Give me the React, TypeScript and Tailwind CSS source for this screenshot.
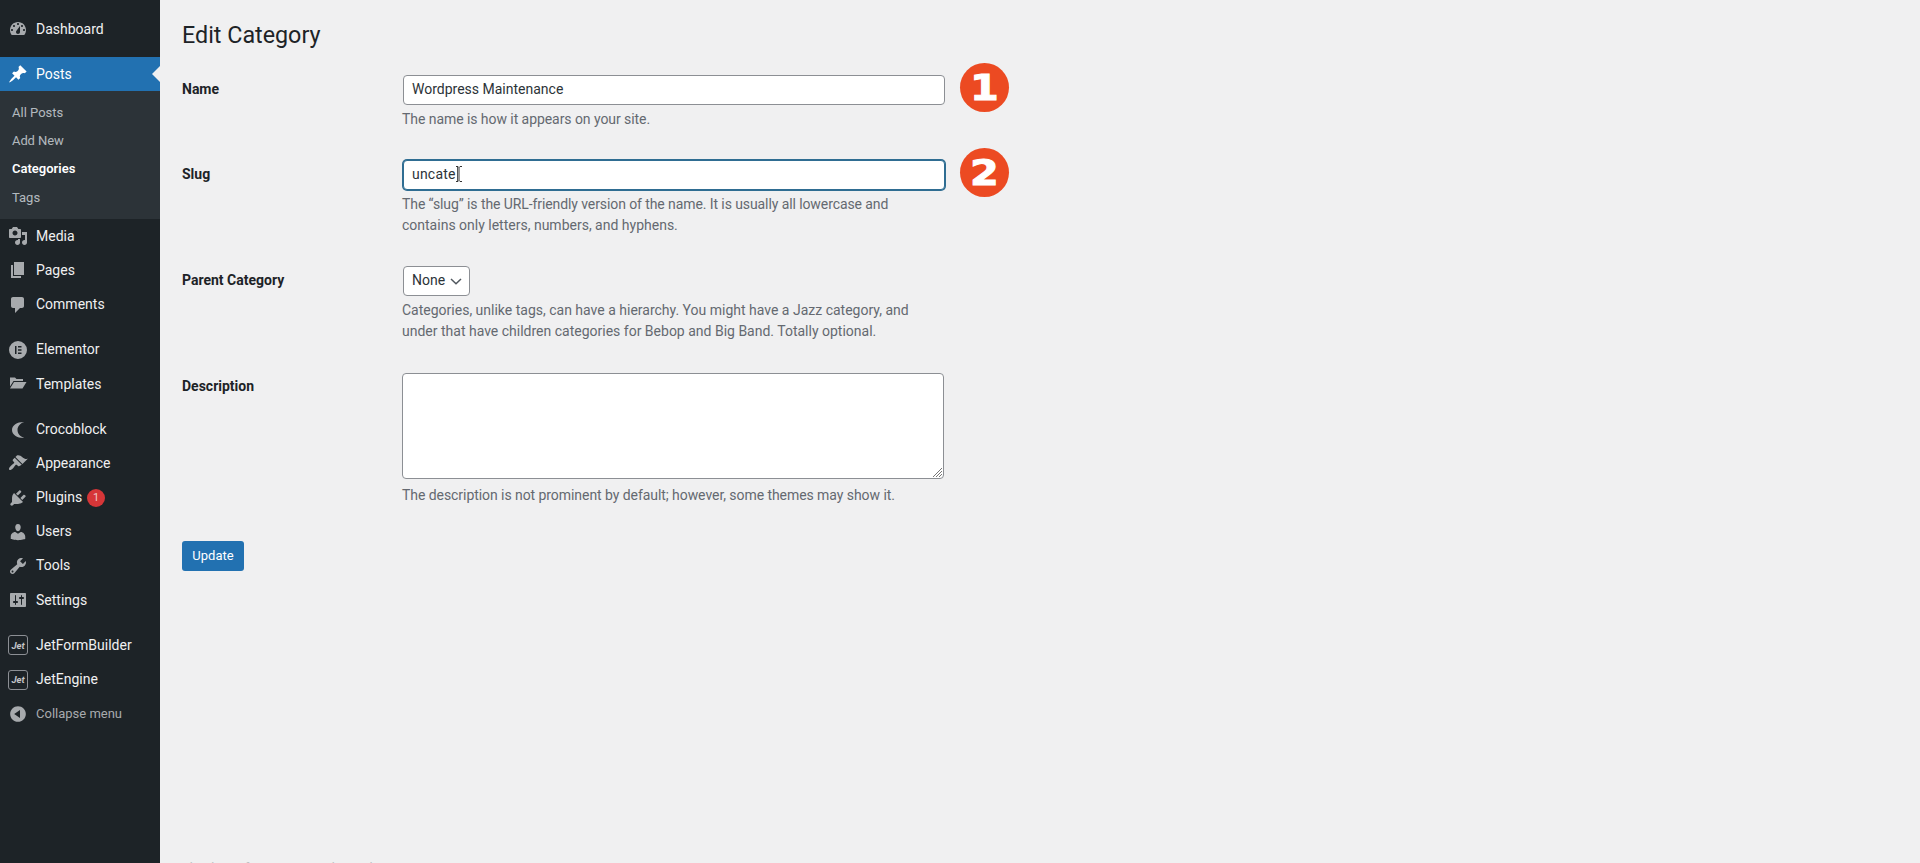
import React from "react";

const icons: Record<string, string> = {
  dashboard:
    "M3.76 16h12.48c1.1-1.37 1.76-3.11 1.76-5 0-4.42-3.58-8-8-8s-8 3.58-8 8c0 1.89.66 3.63 1.76 5zM10 4c.55 0 1 .45 1 1s-.45 1-1 1-1-.45-1-1 .45-1 1-1zM6 6c.55 0 1 .45 1 1s-.45 1-1 1-1-.45-1-1 .45-1 1-1zm8 0c.55 0 1 .45 1 1s-.45 1-1 1-1-.45-1-1 .45-1 1-1zm-5.37 5.55L12 7v6c0 1.1-.9 2-2 2s-2-.9-2-2c0-.57.24-1.08.63-1.45zM4 10c.55 0 1 .45 1 1s-.45 1-1 1-1-.45-1-1 .45-1 1-1zm12 0c.55 0 1 .45 1 1s-.45 1-1 1-1-.45-1-1 .45-1 1-1z",
  posts:
    "M10.44 3.02l1.82-1.82 6.36 6.35-1.83 1.82c-1.05-.68-2.48-.57-3.41.36l-.75.75c-.92.93-1.04 2.35-.35 3.41l-1.83 1.82-2.41-2.41-2.8 2.79c-.42.42-3.38 2.71-3.8 2.29s1.86-3.39 2.28-3.81l2.79-2.79L4.1 9.36l1.83-1.82c1.05.69 2.48.57 3.4-.36l.75-.75c.93-.92 1.05-2.35.36-3.41z",
  media:
    "M13 11V4c0-.55-.45-1-1-1h-1.67L9 1H5L3.67 3H2c-.55 0-1 .45-1 1v7c0 .55.45 1 1 1h10c.55 0 1-.45 1-1zM7 4.5c1.38 0 2.5 1.12 2.5 2.5S8.38 9.5 7 9.5 4.5 8.38 4.5 7 5.62 4.5 7 4.5zM14 6h5v10.5c0 1.38-1.12 2.5-2.5 2.5S14 17.88 14 16.5s1.12-2.5 2.5-2.5c.17 0 .34.02.5.05V9h-3V6zm-4 8.05V13h2v3.5c0 1.38-1.12 2.5-2.5 2.5S7 17.88 7 16.5 8.12 14 9.5 14c.17 0 .34.02.5.05z",
  pages: "M6 15V2h10v13H6zm-1 1h8v2H3V5h2v11z",
  comments:
    "M5 2h9c1.1 0 2 .9 2 2v7c0 1.1-.9 2-2 2h-2l-5 5v-5H5c-1.1 0-2-.9-2-2V4c0-1.1.9-2 2-2z",
  elementor:
    "M10 1a9 9 0 1 0 0 18 9 9 0 0 0 0-18zM7 6h1.5v8H7V6zm3 0h3.5v1.5H10V6zm0 3.25h3.5v1.5H10v-1.5zm0 3.25h3.5V14H10v-1.5z",
  templates: "M2 3.5h5l1.5 1.5h6.5V7H5.5L2 12.5V3.5zM6 8h12.5l-4 6.5H2L6 8z",
  croco:
    "M15.5 3C9 3 4 6.5 4 11s5 8 11.5 8c.3 0 .5 0 .7-.1C12 17.5 9.5 14.5 9.5 11s2.5-6.5 6.7-7.9c-.2-.1-.4-.1-.7-.1z",
  appearance:
    "M14.48 11.06L7.41 3.99l1.5-1.5c.5-.56 2.3-.47 3.51.32 1.21.8 1.43 1.28 2.91 2.1 1.18.64 2.45 1.26 4.45.85zm-.71.71L6.7 4.7 4.93 6.47c-.39.39-.39 1.02 0 1.41l1.06 1.06c.39.39.39 1.03 0 1.42-.6.6-1.43 1.11-2.21 1.69-.35.26-.7.53-1.01.84-1.34 1.34-2.37 2.96-1.52 3.81.84.84 2.46-.18 3.8-1.52.3-.3.58-.65.84-1 .58-.78 1.09-1.61 1.69-2.21.39-.39 1.02-.39 1.41 0l1.06 1.06c.39.39 1.02.39 1.41 0z",
  plugins:
    "M13.11 4.36L9.87 7.6 8 5.73l3.24-3.24c.35-.34 1.05-.2 1.56.32.52.51.66 1.21.31 1.55zm-8 1.77l.91-1.12 9.01 9.01-1.19.84c-.71.71-2.63 1.16-3.82 1.16H6.14L4.9 17.26c-.59.59-1.54.59-2.12 0-.59-.58-.59-1.53 0-2.12l1.24-1.24v-3.88c0-1.13.4-3.19 1.09-3.89zm7.26 3.97l3.24-3.24c.34-.35 1.04-.21 1.55.31.52.51.66 1.21.31 1.55l-3.24 3.25z",
  users:
    "M10 9.25c-2.27 0-2.73-3.44-2.73-3.44C7 4.02 7.82 2 9.97 2c2.16 0 2.98 2.02 2.71 3.81 0 0-.41 3.44-2.68 3.44zm0 2.57L12.72 10c2.39 0 4.52 2.33 4.52 4.53v2.49s-3.65 1.13-7.24 1.13c-3.65 0-7.24-1.13-7.24-1.13v-2.49c0-2.25 1.94-4.48 4.47-4.48z",
  tools:
    "M16.68 9.77c-1.34 1.34-3.3 1.67-4.95.99l-5.41 6.52c-.99.99-2.59.99-3.58 0s-.99-2.59 0-3.57l6.52-5.42c-.68-1.65-.35-3.61.99-4.95 1.28-1.28 3.12-1.62 4.72-1.06l-2.89 2.89 2.82 2.82 2.86-2.87c.53 1.58.18 3.39-1.08 4.65zM3.81 16.21c.4.39 1.04.39 1.43 0 .4-.4.4-1.04 0-1.43-.39-.4-1.03-.4-1.43 0-.39.39-.39 1.03 0 1.43z",
  settings:
    "M18 16V4c0-.55-.45-1-1-1H3c-.55 0-1 .45-1 1v12c0 .55.45 1 1 1h14c.55 0 1-.45 1-1zM8 11h1c.55 0 1 .45 1 1s-.45 1-1 1H8v1.5c0 .28-.22.5-.5.5s-.5-.22-.5-.5V13H6c-.55 0-1-.45-1-1s.45-1 1-1h1V5.5c0-.28.22-.5.5-.5s.5.22.5.5V11zm5-2h-1c-.55 0-1-.45-1-1s.45-1 1-1h1V5.5c0-.28.22-.5.5-.5s.5.22.5.5V7h1c.55 0 1 .45 1 1s-.45 1-1 1h-1v5.5c0 .28-.22.5-.5.5s-.5-.22-.5-.5V9z",
  collapse:
    "M10 2.16c4.33 0 7.84 3.51 7.84 7.84s-3.51 7.84-7.84 7.84S2.16 14.33 2.16 10 5.71 2.16 10 2.16zm2 11.72V6.12L6.18 9.97z",
};

function MenuIcon({ name }: { name: string }) {
  return (
    <svg viewBox="0 0 20 20" className="w-5 h-5 fill-current" fillRule="evenodd">
      <path d={icons[name]} />
    </svg>
  );
}

function JetIcon() {
  return (
    <div className="w-5 h-5 rounded-[3px] border border-[#8c8f94] flex items-center justify-center text-[9.5px] leading-none font-bold italic text-[#c3c4c7]">
      Jet
    </div>
  );
}

function MenuItem({
  icon,
  label,
  badge,
}: {
  icon?: string;
  label: string;
  badge?: string;
}) {
  return (
    <div className="flex items-center h-[34.2px] text-[14px] text-[#f0f0f1]">
      <div className="w-[36px] pl-2 text-[#a7aaad]">
        {icon ? <MenuIcon name={icon} /> : <JetIcon />}
      </div>
      <span>{label}</span>
      {badge && (
        <span className="ml-[5px] mt-[1px] w-[18px] h-[18px] rounded-full bg-[#d63638] text-[#f0c9c9] text-[11px] flex items-center justify-center">
          {badge}
        </span>
      )}
    </div>
  );
}

function Sidebar() {
  return (
    <aside className="w-[160px] shrink-0 h-full bg-[#1d2327] pt-3">
      <MenuItem icon="dashboard" label="Dashboard" />
      <div className="h-[11px]" />
      <div className="relative flex items-center h-[34px] bg-[#2271b1] text-[14px] text-white">
        <div className="w-[36px] pl-2">
          <MenuIcon name="posts" />
        </div>
        <span>Posts</span>
        <div className="absolute right-0 top-[9px] border-y-[8px] border-y-transparent border-r-[8px] border-r-[#f0f0f1]" />
      </div>
      <div className="bg-[#2c3338] h-[128px] pt-[7px] pl-3 text-[13px] text-[#f0f6fcb3]">
        <div className="h-[28.4px] flex items-center">All Posts</div>
        <div className="h-[28.4px] flex items-center tracking-[-0.1px]">Add New</div>
        <div className="h-[28.4px] flex items-center font-semibold text-white">Categories</div>
        <div className="h-[28.4px] flex items-center pt-[1px]">Tags</div>
      </div>
      <MenuItem icon="media" label="Media" />
      <MenuItem icon="pages" label="Pages" />
      <MenuItem icon="comments" label="Comments" />
      <div className="h-[11px]" />
      <MenuItem icon="elementor" label="Elementor" />
      <MenuItem icon="templates" label="Templates" />
      <div className="h-[11px]" />
      <MenuItem icon="croco" label="Crocoblock" />
      <MenuItem icon="appearance" label="Appearance" />
      <MenuItem icon="plugins" label="Plugins" badge="1" />
      <MenuItem icon="users" label="Users" />
      <MenuItem icon="tools" label="Tools" />
      <MenuItem icon="settings" label="Settings" />
      <div className="h-[11px]" />
      <MenuItem label="JetFormBuilder" />
      <MenuItem label="JetEngine" />
      <div className="flex items-center h-[34px] text-[13px] text-[#a7aaad]">
        <div className="w-[36px] pl-2">
          <MenuIcon name="collapse" />
        </div>
        <span>Collapse menu</span>
      </div>
    </aside>
  );
}

// the orange numbered callouts sit beside the fields, over the free page area
function Step({ n }: { n: string }) {
  return (
    <div className="absolute left-[778px] top-[3px] w-[49px] h-[49px] rounded-full bg-[#ec4a22] text-white flex items-center justify-center text-[36px] leading-none font-bold font-['DejaVu_Sans',sans-serif]">
      <span className="scale-x-[1.15] [-webkit-text-stroke:1px_white]">{n}</span>
    </div>
  );
}

function Row({ label, children }: { label: string; children: React.ReactNode }) {
  return (
    <div className="relative flex py-[15px]">
      <div className="w-[220px] shrink-0 pt-[4px] text-[14px] leading-[21px] font-bold text-[#1d2327]">
        {label}
      </div>
      <div className="w-[542px]">{children}</div>
    </div>
  );
}

function Hint({ children }: { children: React.ReactNode }) {
  return <p className="mt-1 text-[14px] leading-[21px] text-[#646970]">{children}</p>;
}

export default function App() {
  return (
    <div className="flex w-[1920px] h-[863px] overflow-hidden bg-[#f0f0f1] font-['Roboto',sans-serif]">
      <Sidebar />
      <main className="flex-1 pl-[22px]">
        <h1 className="pt-[20px] text-[23.3px] leading-[30px] text-[#1d2327]">Edit Category</h1>
        <div className="mt-[10px]">
          <Row label="Name">
            <div className="ml-[1px] w-[542px] h-[30px] rounded-[4px] border border-[#8c8f94] bg-white px-2 pb-[2px] flex items-center text-[14px] text-[#2c3338]">
              Wordpress Maintenance
            </div>
            <Hint>
              <span className="tracking-[-0.06px]">The name is how it appears on your site.</span>
            </Hint>
            <Step n="1" />
          </Row>
          <Row label="Slug">
            <div className="relative ml-[1px] w-[542px] h-[30px] rounded-[4px] border border-[#2f6d92] shadow-[0_0_0_1px_#2f6d92] bg-white px-2 pb-[2px] flex items-center text-[14px] text-[#2c3338]">
              <span className="tracking-[0.2px]">uncate</span>
              <span className="ml-[1px] w-px h-[16px] bg-[#555]" />
              <svg viewBox="0 0 8 16" className="absolute left-[51px] top-[5px] w-2 h-4 fill-none stroke-[#333]">
                <path d="M1 .5h2l1 1 1-1h2M4 1.5v13M1 15.5h2l1-1 1 1h2" />
              </svg>
            </div>
            <Hint>
              <span className="tracking-[-0.09px]">
                The “slug” is the URL-friendly version of the name. It is usually all lowercase and
              </span>{" "}
              contains only letters, numbers, and hyphens.
            </Hint>
            <Step n="2" />
          </Row>
          <Row label="Parent Category">
            <div className="ml-[1px] w-[67px] h-[30px] rounded-[4px] border border-[#8c8f94] bg-white pl-2 pb-[2px] flex items-center gap-[5px] text-[14px] text-[#2c3338]">
              None
              <svg viewBox="0 0 12 7" className="w-3 h-[7px] mt-[3px] fill-none stroke-[#50575e] stroke-[1.5]">
                <path d="M1 1l5 4.8L11 1" />
              </svg>
            </div>
            <Hint>
              Categories, unlike tags, can have a hierarchy. You might have a Jazz category, and
              under that have children categories for Bebop and Big Band. Totally optional.
            </Hint>
          </Row>
          <Row label="Description">
            <div className="relative mt-[1px] h-[106px] rounded-[4px] border border-[#8c8f94] bg-white">
              <svg viewBox="0 0 10 10" className="absolute right-[1px] bottom-[1px] w-[10px] h-[10px] stroke-[#777]">
                <path d="M1 10 10 1M4 10l6-6M7 10l3-3" />
              </svg>
            </div>
            <p className="mt-[6px] text-[14px] leading-[21px] text-[#646970] tracking-[-0.06px]">
              The description is not prominent by default; however, some themes may show it.
            </p>
          </Row>
        </div>
        <button className="mt-[20px] h-[30px] w-[62px] rounded-[3px] bg-[#2271b1] text-white text-[13px] flex items-center justify-center">
          Update
        </button>
        <p className="mt-[287px] text-[13px] leading-[20px] text-[#bdbfc2]">
          Thank you for creating with WordPress.
        </p>
      </main>
    </div>
  );
}
